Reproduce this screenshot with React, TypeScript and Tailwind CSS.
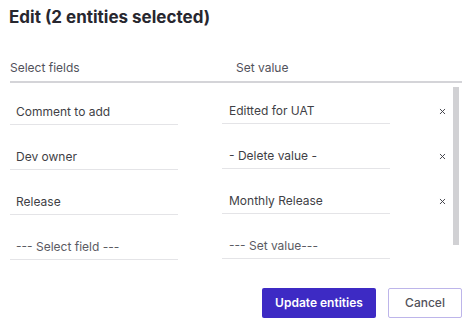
import { X } from "lucide-react";

const rows = [
  { field: "Comment to add", value: "Editted for UAT", empty: false },
  { field: "Dev owner", value: "- Delete value -", empty: false },
  { field: "Release", value: "Monthly Release", empty: false },
  { field: "--- Select field ---", value: "--- Set value---", empty: true },
];

export default function App() {
  return (
    <div
      className="w-[474px] h-[324px] bg-white overflow-hidden text-[#3f3f46]"
      style={{ fontFamily: "Inter, 'Noto Sans', sans-serif" }}
    >
      {/* Title */}
      <h1 className="pl-[9px] pt-[5px] h-[57px] text-[17px] leading-[24px] font-bold text-[#27272f]">
        Edit (2 entities selected)
      </h1>

      {/* Column headers */}
      <div className="flex h-[20px] items-center pt-[1px] text-[12px] leading-[20px] text-[#52525b]">
        <div className="pl-[10px] w-[236px]">Select fields</div>
        <div>Set value</div>
      </div>
      <div className="ml-[10px] mr-[12px] mt-[4px] h-[2px] bg-[#d4d4d8]" />

      {/* Rows + scrollbar */}
      <div className="flex h-[190px]">
        <div className="flex flex-col gap-[13px] pt-[10px] pl-[10px]">
          {rows.map((r) => (
            <div key={r.field} className="flex items-center h-[32px]">
              <div
                className={`w-[168px] h-[32px] flex items-center pt-[6px] pl-[6px] border-b border-[#e4e4e7] text-[12px] ${
                  r.empty ? "text-[#5b5b63]" : "text-[#3f3f46]"
                }`}
              >
                {r.field}
              </div>
              <div
                className={`ml-[44px] w-[168px] h-[31px] flex items-center pt-[5px] pl-[7px] border-b border-[#e4e4e7] text-[12px] self-start ${
                  r.empty ? "text-[#5b5b63]" : "text-[#3f3f46]"
                }`}
              >
                {r.value}
              </div>
              <div className="w-[58px] h-[32px] flex items-center justify-end pr-[1px] pt-[4px]">
                {!r.empty && <X className="w-[9px] h-[9px] text-[#3f3f46]" strokeWidth={2.5} />}
              </div>
            </div>
          ))}
        </div>
        <div className="ml-[5px] w-[6px] pt-[4px]">
          <div className="h-[158px] w-[6px] bg-[#d1d1d4]" />
        </div>
      </div>

      {/* Buttons */}
      <div className="flex justify-end gap-[12px] pr-[12px] pt-[15px]">
        <button
          type="button"
          className="w-[114px] h-[30px] rounded-[2px] bg-[#3d2ac4] text-white text-[12px] font-semibold"
        >
          Update entities
        </button>
        <button
          type="button"
          className="w-[74px] h-[30px] rounded-[2px] border border-[#bdb5ea] bg-white text-[#52525b] text-[12px] font-medium"
        >
          Cancel
        </button>
      </div>
    </div>
  );
}
